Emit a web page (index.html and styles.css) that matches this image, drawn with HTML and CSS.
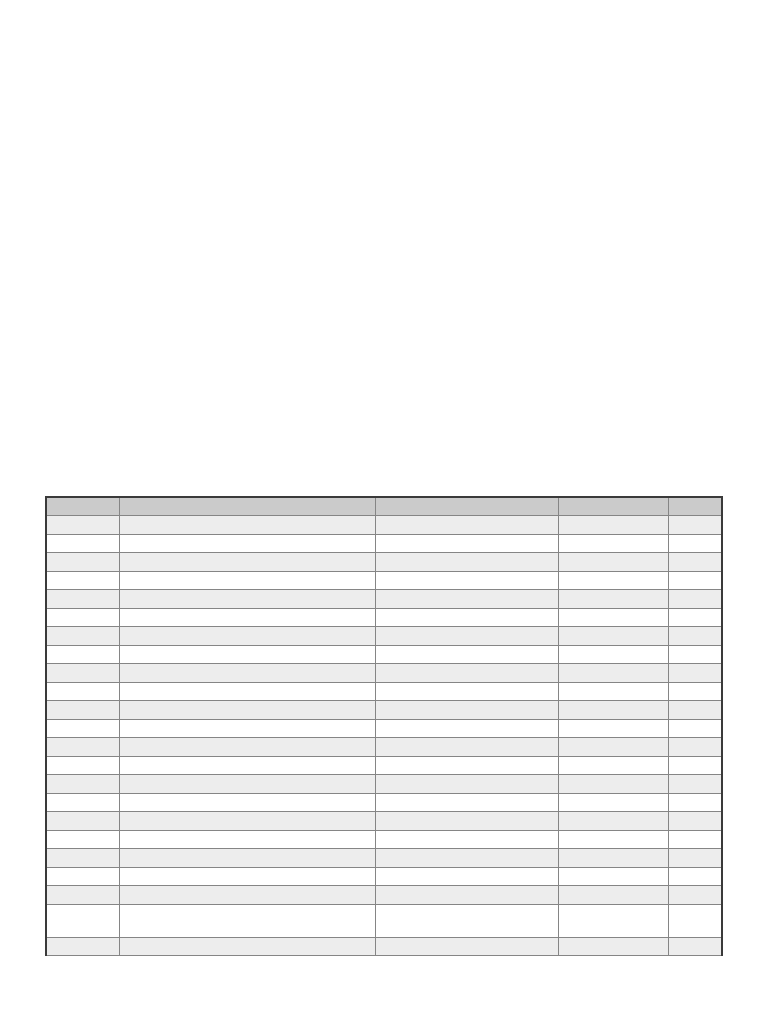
FILE: index.html
```html
<!DOCTYPE html>
<html>
<head>
<meta charset="utf-8">
<link rel="stylesheet" href="styles.css">
</head>
<body>
<main class="page">
  <table class="grid">
    <colgroup>
      <col class="c1"><col class="c2"><col class="c3"><col class="c4"><col class="c5">
    </colgroup>
    <thead>
      <tr class="head"><th></th><th></th><th></th><th></th><th></th></tr>
    </thead>
    <tbody>
      <tr class="odd"><td></td><td></td><td></td><td></td><td></td></tr>
      <tr class="even"><td></td><td></td><td></td><td></td><td></td></tr>
      <tr class="odd"><td></td><td></td><td></td><td></td><td></td></tr>
      <tr class="even"><td></td><td></td><td></td><td></td><td></td></tr>
      <tr class="odd"><td></td><td></td><td></td><td></td><td></td></tr>
      <tr class="even"><td></td><td></td><td></td><td></td><td></td></tr>
      <tr class="odd"><td></td><td></td><td></td><td></td><td></td></tr>
      <tr class="even"><td></td><td></td><td></td><td></td><td></td></tr>
      <tr class="odd"><td></td><td></td><td></td><td></td><td></td></tr>
      <tr class="even"><td></td><td></td><td></td><td></td><td></td></tr>
      <tr class="odd"><td></td><td></td><td></td><td></td><td></td></tr>
      <tr class="even"><td></td><td></td><td></td><td></td><td></td></tr>
      <tr class="odd"><td></td><td></td><td></td><td></td><td></td></tr>
      <tr class="even"><td></td><td></td><td></td><td></td><td></td></tr>
      <tr class="odd"><td></td><td></td><td></td><td></td><td></td></tr>
      <tr class="even"><td></td><td></td><td></td><td></td><td></td></tr>
      <tr class="odd"><td></td><td></td><td></td><td></td><td></td></tr>
      <tr class="even"><td></td><td></td><td></td><td></td><td></td></tr>
      <tr class="odd"><td></td><td></td><td></td><td></td><td></td></tr>
      <tr class="even"><td></td><td></td><td></td><td></td><td></td></tr>
      <tr class="odd"><td></td><td></td><td></td><td></td><td></td></tr>
      <tr class="even tall"><td></td><td></td><td></td><td></td><td></td></tr>
      <tr class="odd"><td></td><td></td><td></td><td></td><td></td></tr>
    </tbody>
  </table>
</main>
</body>
</html>
```

FILE: styles.css
```css
html, body {
  margin: 0;
  padding: 0;
  background: #ffffff;
  font-family: "Liberation Sans", Arial, sans-serif;
}

.page {
  padding: 496px 46px 0 45px;
}

.grid {
  width: 676px;
  border-collapse: collapse;
  table-layout: fixed;
  border-top: 2px solid #3a3a3a;
  border-left: 2px solid #3a3a3a;
  border-right: 2px solid #3a3a3a;
  border-bottom: 1px solid #8a8a8a;
}

.c1 { width: 73px; }
.c2 { width: 256px; }
.c3 { width: 183px; }
.c4 { width: 110px; }
.c5 { width: 54px; }

.grid th,
.grid td {
  border: 1px solid #858585;
  padding: 0;
  height: 17.5px;
}

.grid tr.head th {
  background: #cbcbcb;
  height: 17px;
}

.grid tr.odd td { background: #ededed; }
.grid tr.even td { background: #ffffff; }

.grid tr.tall td { height: 32px; }
```
